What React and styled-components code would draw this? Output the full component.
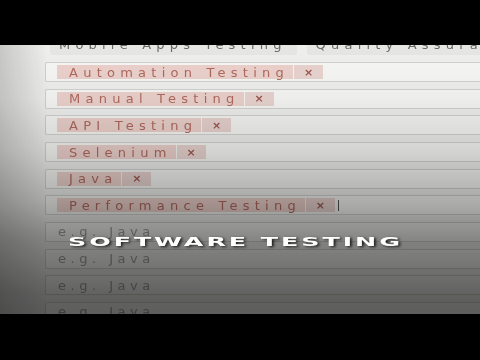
import React from 'react';
import styled, { createGlobalStyle } from 'styled-components';

const GlobalStyle = createGlobalStyle`
  html, body {
    margin: 0;
    padding: 0;
    background: #000;
  }
`;

const suggestions = ['Mobile Apps Testing', 'Quality Assurance'];

const skills = [
  'Automation Testing',
  'Manual Testing',
  'API Testing',
  'Selenium',
  'Java',
  'Performance Testing',
];

const App = () => {
  return (
    <>
      <GlobalStyle />
      <StScreen>
        <StFrame>
          <StColumn>
            <StSuggestions>
              {suggestions.map((s) => (
                <StSuggestion key={s}>{s}</StSuggestion>
              ))}
            </StSuggestions>
            {skills.map((skill, i) => (
              <StRow key={skill}>
                <StChip>
                  <StChipLabel>{skill}</StChipLabel>
                  <StChipRemove>×</StChipRemove>
                </StChip>
                {i === skills.length - 1 && <StCaret />}
              </StRow>
            ))}
            {[0, 1, 2, 3].map((n) => (
              <StRow key={n}>
                <StPlaceholder>e.g. Java</StPlaceholder>
              </StRow>
            ))}
          </StColumn>
          <StShade />
          <StCaption>SOFTWARE TESTING</StCaption>
        </StFrame>
      </StScreen>
    </>
  );
};

export default App;

const StScreen = styled.div`
  width: 480px;
  height: 360px;
  box-sizing: border-box;
  padding: 45px 0 46px;
  background: #000;
  overflow: hidden;
`;

const StFrame = styled.div`
  position: relative;
  height: 269px;
  overflow: hidden;
  background: #efefed;
  font-family: 'DejaVu Sans', 'Liberation Sans', sans-serif;
`;

const StColumn = styled.div`
  display: flex;
  flex-direction: column;
  gap: 6.67px;
  padding-left: 45px;
  margin-right: -20px;
`;

const StSuggestions = styled.div`
  display: flex;
  gap: 10px;
  margin: -10px 0 0.4px 5px;
  white-space: nowrap;
`;

const StSuggestion = styled.div`
  height: 20px;
  line-height: 20px;
  padding: 0 10px 0 9px;
  background: #e6e6e4;
  border-radius: 3px;
  color: #6a6a68;
  font-size: 13px;
  letter-spacing: 5.2px;
`;

const StRow = styled.div`
  display: flex;
  align-items: center;
  height: 20px;
  box-sizing: border-box;
  border: 1px solid #d2d2d0;
  border-right: none;
  border-radius: 2px 0 0 2px;
  background: #f6f6f4;
  padding-left: 11px;
`;

const StChip = styled.div`
  display: flex;
  gap: 1px;
  height: 14px;
`;

const StChipLabel = styled.span`
  display: flex;
  align-items: center;
  padding: 0 4px 0 12px;
  background: #ecd1cb;
  color: #b0695f;
  font-size: 13px;
  letter-spacing: 5.25px;
  white-space: nowrap;
`;

const StChipRemove = styled.span`
  display: flex;
  align-items: center;
  justify-content: center;
  width: 29px;
  background: #e8d3cf;
  color: #9c574f;
  font-size: 11px;
  font-weight: bold;
`;

const StCaret = styled.span`
  width: 1.5px;
  height: 11px;
  margin-left: 3px;
  background: #555;
`;

const StPlaceholder = styled.span`
  padding-left: 1px;
  color: #a2a2a0;
  font-size: 13px;
  letter-spacing: 4.5px;
`;

const StShade = styled.div`
  position: absolute;
  inset: 0;
  pointer-events: none;
  mix-blend-mode: multiply;
  background:
    linear-gradient(to right, rgba(0, 0, 0, 0.16), rgba(0, 0, 0, 0) 10%),
    linear-gradient(
      to bottom,
      #ffffff 0%,
      #f6f6f6 20%,
      #dcdcdc 39%,
      #b4b4b4 58%,
      #8c8c8c 72%,
      #676767 92%,
      #606060 100%
    );
`;

const StCaption = styled.div`
  position: absolute;
  left: 68px;
  top: 190px;
  transform: scaleX(1.95);
  transform-origin: left center;
  color: #fff;
  font-size: 13px;
  line-height: 13px;
  font-weight: bold;
  letter-spacing: 1.5px;
  white-space: nowrap;
  text-shadow: 1px 1px 2px rgba(0, 0, 0, 0.75);
`;
